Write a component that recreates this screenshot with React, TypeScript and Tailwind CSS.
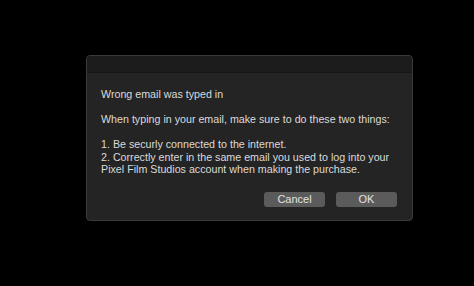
export default function App() {
    return (
        <div className="w-[474px] h-[286px] bg-black pl-[86px] pt-[55px]" style={{ fontFamily: '"Liberation Sans", Arial, sans-serif' }}>
            <div className="w-[327px] h-[166px] rounded-[4px] border border-[#3a3a3a] bg-[#242424] overflow-hidden flex flex-col">
                <div className="h-[17px] shrink-0 bg-[#1c1c1c] border-b border-[#161616]" />
                <div className="flex-1 pl-[14px] pr-[15px] pt-[15px] text-[10.7px] leading-[12.5px] text-[#dadada] whitespace-nowrap">
                    <p>Wrong email was typed in</p>
                    <p className="mt-[12.5px]">When typing in your email, make sure to do these two things:</p>
                    <p className="mt-[12.5px]">1. Be securly connected to the internet.</p>
                    <p>2. Correctly enter in the same email you used to log into your</p>
                    <p>Pixel Film Studios account when making the purchase.</p>
                    <div className="flex justify-end gap-[11px] mt-[16px]">
                        <button className="w-[61px] h-[15px] rounded-[3px] bg-[#5b5b5b] text-[11px] leading-[15px] text-[#e2e2e2]">Cancel</button>
                        <button className="w-[61px] h-[15px] rounded-[3px] bg-[#5b5b5b] text-[11px] leading-[15px] text-[#e2e2e2]">OK</button>
                    </div>
                </div>
            </div>
        </div>
    );
}
